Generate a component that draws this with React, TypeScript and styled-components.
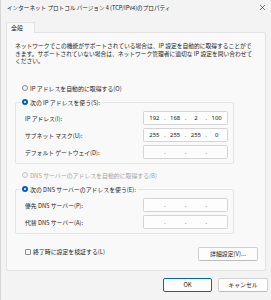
import * as React from 'react'
import styled, { createGlobalStyle } from 'styled-components'

const GlobalStyle = createGlobalStyle`
    html, body {
        margin: 0;
        padding: 0;
        background: #f0f0f0;
    }
    body {
        font-family: 'Noto Sans CJK JP', 'Noto Sans', sans-serif;
        color: #1b1b1b;
    }
`

const Window = styled.div`
    width: 271px;
    height: 300px;
    box-sizing: border-box;
    background: #f3f3f3;
    border-left: 1px solid #d6d6d6;
    display: flex;
    flex-direction: column;
    overflow: hidden;
`
const TitleBar = styled.div`
    height: 15px;
    display: flex;
    align-items: center;
    justify-content: space-between;
    padding: 0 5px 0 6px;
`
const Title = styled.div`
    font-size: 5.6px;
    line-height: 8px;
    white-space: nowrap;
`
const Tabs = styled.div`
    display: flex;
    padding: 7px 0 0 5px;
    position: relative;
    z-index: 1;
`
const Tab = styled.div`
    width: 29px;
    height: 11px;
    box-sizing: border-box;
    background: #f9f9f9;
    border: 1px solid #e2e2e2;
    border-bottom: none;
    border-radius: 2px 2px 0 0;
    font-size: 6px;
    line-height: 10px;
    padding-left: 4px;
`
const Panel = styled.div`
    margin: -1px 5px 0 5px;
    background: #f9f9f9;
    border: 1px solid #e2e2e2;
    border-radius: 0 2px 2px 2px;
    padding: 9px 7px 9px 8px;
    display: flex;
    flex-direction: column;
`
const Description = styled.div`
    font-size: 5.75px;
    line-height: 7.5px;
    white-space: nowrap;
`
const OptionRow = styled.div<{ $top: number; $disabled?: boolean }>`
    display: flex;
    align-items: center;
    height: 8px;
    margin-top: ${(p) => p.$top}px;
    padding-left: 7px;
    font-size: 5.9px;
    white-space: nowrap;
    color: ${(p) => (p.$disabled ? '#a3a3a3' : '#1b1b1b')};
`
const Radio = styled.span<{ $checked?: boolean; $disabled?: boolean }>`
    width: 6px;
    height: 6px;
    box-sizing: border-box;
    border-radius: 50%;
    margin-right: 2px;
    flex: none;
    background: ${(p) => (p.$checked ? '#005fb8' : '#f5f5f5')};
    border: ${(p) =>
        p.$checked ? 'none' : `1px solid ${p.$disabled ? '#c4c4c4' : '#8b8b8b'}`};
    display: flex;
    align-items: center;
    justify-content: center;
    &::after {
        content: '';
        display: ${(p) => (p.$checked ? 'block' : 'none')};
        width: 2.4px;
        height: 2.4px;
        border-radius: 50%;
        background: #ffffff;
    }
`
const Group = styled.fieldset<{ $top: number }>`
    margin: ${(p) => p.$top}px 24px 0 0;
    padding: 5px 5px 3.5px 6px;
    border: 1px solid #e4e4e4;
    border-radius: 2px;
    display: flex;
    flex-direction: column;
    gap: 3px;
    min-width: 0;
`
const Legend = styled.legend`
    margin-left: -1px;
    padding: 0 2px 0 1px;
    height: 8px;
    display: flex;
    align-items: center;
    font-size: 5.9px;
    white-space: nowrap;
`
const FieldRow = styled.div`
    display: flex;
    align-items: center;
    justify-content: space-between;
    padding-left: 3px;
    height: 14px;
`
const FieldLabel = styled.span`
    font-size: 5.8px;
    white-space: nowrap;
`
const IpBox = styled.div`
    width: 85px;
    height: 14px;
    box-sizing: border-box;
    background: #fdfdfd;
    border: 1px solid #d4d4d4;
    border-radius: 1.5px;
    display: grid;
    grid-template-columns: 1fr 6px 1fr 6px 1fr 6px 1fr;
    align-items: center;
    padding: 0 3px;
    font-family: 'Noto Sans', sans-serif;
    font-size: 6px;
    color: #1b1b1b;
`
const Octet = styled.span`
    text-align: center;
`
const Dot = styled.span`
    text-align: center;
    color: #6a6a6a;
`
const BottomRow = styled.div`
    display: flex;
    align-items: center;
    justify-content: space-between;
    margin-top: 13px;
    height: 14px;
`
const CheckLabel = styled.label`
    display: flex;
    align-items: center;
    margin: 0 0 4px 10px;
    font-size: 5.9px;
    white-space: nowrap;
`
const CheckBox = styled.span`
    width: 6px;
    height: 6px;
    box-sizing: border-box;
    border: 1px solid #8b8b8b;
    border-radius: 1px;
    background: #f5f5f5;
    margin-right: 2px;
`
const Button = styled.button<{ $primary?: boolean; $width: number }>`
    width: ${(p) => p.$width}px;
    height: 14px;
    box-sizing: border-box;
    padding: 0;
    background: #fdfdfd;
    border: 1px solid ${(p) => (p.$primary ? '#0067c0' : '#d0d0d0')};
    border-bottom-color: ${(p) => (p.$primary ? '#0067c0' : '#bdbdbd')};
    border-radius: 2px;
    font-family: 'Noto Sans CJK JP', 'Noto Sans', sans-serif;
    font-size: 5.9px;
    color: #1b1b1b;
    white-space: nowrap;
`
const Footer = styled.div`
    display: flex;
    justify-content: flex-end;
    gap: 6px;
    padding: 7px 3px 0 0;
`

const IpField = ({ value }: { value?: string[] }): JSX.Element => {
    const parts = value ?? ['', '', '', '']
    return (
        <IpBox>
            <Octet>{parts[0]}</Octet>
            <Dot>.</Dot>
            <Octet>{parts[1]}</Octet>
            <Dot>.</Dot>
            <Octet>{parts[2]}</Octet>
            <Dot>.</Dot>
            <Octet>{parts[3]}</Octet>
        </IpBox>
    )
}

const CloseIcon = (): JSX.Element => (
    <svg width="7" height="7" viewBox="0 0 10 10">
        <path d="M1.5 1.5 L8.5 8.5 M8.5 1.5 L1.5 8.5" stroke="#3a3a3a" strokeWidth="1" />
    </svg>
)

const App = (): JSX.Element => {
    return (
        <>
            <GlobalStyle />
            <Window>
                <TitleBar>
                    <Title>インターネット プロトコル バージョン 4 (TCP/IPv4)のプロパティ</Title>
                    <CloseIcon />
                </TitleBar>
                <Tabs>
                    <Tab>全般</Tab>
                </Tabs>
                <Panel>
                    <Description>
                        ネットワークでこの機能がサポートされている場合は、IP 設定を自動的に取得することがで
                        <br />
                        きます。サポートされていない場合は、ネットワーク管理者に適切な IP 設定を問い合わせて
                        <br />
                        ください。
                    </Description>
                    <OptionRow $top={19.5}>
                        <Radio />
                        IP アドレスを自動的に取得する(O)
                    </OptionRow>
                    <Group $top={6}>
                        <Legend>
                            <Radio $checked />
                            次の IP アドレスを使う(S):
                        </Legend>
                        <FieldRow>
                            <FieldLabel>IP アドレス(I):</FieldLabel>
                            <IpField value={['192', '168', '2', '100']} />
                        </FieldRow>
                        <FieldRow>
                            <FieldLabel>サブネット マスク(U):</FieldLabel>
                            <IpField value={['255', '255', '255', '0']} />
                        </FieldRow>
                        <FieldRow>
                            <FieldLabel>デフォルト ゲートウェイ(D):</FieldLabel>
                            <IpField />
                        </FieldRow>
                    </Group>
                    <OptionRow $top={7.5} $disabled>
                        <Radio $disabled />
                        DNS サーバーのアドレスを自動的に取得する(B)
                    </OptionRow>
                    <Group $top={6}>
                        <Legend>
                            <Radio $checked />
                            次の DNS サーバーのアドレスを使う(E):
                        </Legend>
                        <FieldRow>
                            <FieldLabel>優先 DNS サーバー(P):</FieldLabel>
                            <IpField />
                        </FieldRow>
                        <FieldRow>
                            <FieldLabel>代替 DNS サーバー(A):</FieldLabel>
                            <IpField />
                        </FieldRow>
                    </Group>
                    <BottomRow>
                        <CheckLabel>
                            <CheckBox />
                            終了時に設定を検証する(L)
                        </CheckLabel>
                        <Button $width={60}>詳細設定(V)...</Button>
                    </BottomRow>
                </Panel>
                <Footer>
                    <Button $primary $width={49}>
                        OK
                    </Button>
                    <Button $width={50}>キャンセル</Button>
                </Footer>
            </Window>
        </>
    )
}

export default App
